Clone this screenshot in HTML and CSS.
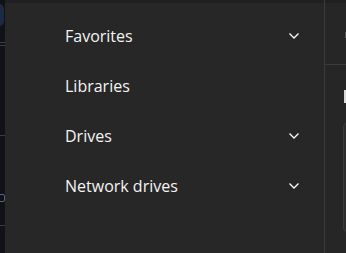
FILE: index.html
```html
<!DOCTYPE html>
<html>
<head>
<meta charset="utf-8">
<link rel="stylesheet" href="styles.css">
</head>
<body>
<div class="app">
  <div class="backstrip">
    <div class="blob"></div>
    <div class="bline l1"></div>
    <div class="bline l2"></div>
    <div class="bline l3"></div>
    <div class="bbox"></div>
    <div class="bline l4"></div>
  </div>
  <div class="panel">
    <div class="topedge"></div>
    <ul class="nav">
      <li class="item"><span class="label">Favorites</span>
        <svg class="chev" width="10" height="6" viewBox="0 0 10 6"><path d="M0.5 0.5 L5 5 L9.5 0.5" fill="none" stroke="#fff" stroke-width="1.3"/></svg></li>
      <li class="item"><span class="label">Libraries</span></li>
      <li class="item"><span class="label">Drives</span>
        <svg class="chev" width="10" height="6" viewBox="0 0 10 6"><path d="M0.5 0.5 L5 5 L9.5 0.5" fill="none" stroke="#fff" stroke-width="1.3"/></svg></li>
      <li class="item"><span class="label">Network drives</span>
        <svg class="chev" width="10" height="6" viewBox="0 0 10 6"><path d="M0.5 0.5 L5 5 L9.5 0.5" fill="none" stroke="#fff" stroke-width="1.3"/></svg></li>
    </ul>
  </div>
  <div class="side">
    <div class="sidehead"><div class="nub"></div></div>
    <div class="sidebody">
      <div class="whitebar"></div>
      <div class="card"></div>
    </div>
  </div>
</div>
</body>
</html>
```
FILE: styles.css
```css
html, body {
  margin: 0;
  padding: 0;
  background: #262626;
}
.app {
  display: flex;
  width: 346px;
  height: 253px;
  overflow: hidden;
  font-family: "Open Sans", "Noto Sans", sans-serif;
}
.backstrip {
  width: 5px;
  flex: none;
  background: #101218;
  position: relative;
}
.blob {
  position: absolute;
  left: -6px;
  top: 4px;
  width: 10px;
  height: 22px;
  border-radius: 5px;
  background: #1b2a45;
}
.bline {
  position: absolute;
  left: 0;
  width: 5px;
  height: 1px;
  background: #3a3d44;
}
.l1 { top: 42px; }
.l2 { top: 45px; }
.l3 { top: 135px; }
.l4 { top: 225px; }
.bbox {
  position: absolute;
  left: -4px;
  top: 194px;
  width: 7px;
  height: 6px;
  border: 1px solid #55658a;
  border-radius: 2px;
}
.panel {
  width: 319px;
  flex: none;
  background: #272727;
  border-right: 1px solid #3b3b3b;
  display: flex;
  flex-direction: column;
}
.topedge {
  height: 3px;
  background: #202020;
}
.nav {
  list-style: none;
  margin: 0;
  padding: 8px 0 0 60px;
}
.item {
  height: 50px;
  display: flex;
  align-items: center;
  justify-content: space-between;
  padding-right: 25px;
  color: #f4f4f4;
  font-size: 16px;
}
.item .label {
  margin-top: 0;
}
.chev {
  display: block;
  margin-top: -1px;
}
.side {
  flex: 1;
  display: flex;
  flex-direction: column;
  background: #262626;
}
.sidehead {
  border-top: 3px solid #202020;
  border-bottom: 1px solid #3b3b3b;
  box-sizing: border-box;
  height: 65px;
  position: relative;
}
.nub {
  position: absolute;
  left: 20px;
  top: 29px;
  width: 3px;
  height: 6px;
  background: #5a5a5a;
}
.sidebody {
  flex: 1;
  position: relative;
}
.whitebar {
  position: absolute;
  left: 19px;
  top: 25px;
  width: 3px;
  height: 13px;
  background: #d8d8d8;
}
.card {
  position: absolute;
  left: 18px;
  top: 58px;
  width: 20px;
  height: 107px;
  border: 1px solid #3a3a3a;
  border-radius: 4px;
  background: #2c2c2c;
}
```
